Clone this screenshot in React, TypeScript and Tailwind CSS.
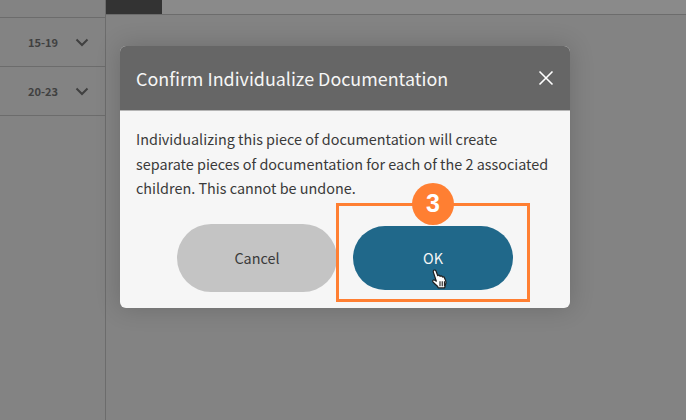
const font = { fontFamily: '"Noto Sans CJK JP", "Noto Sans", sans-serif' };

const HandCursor = () => (
  <svg width="18" height="20" viewBox="0 0 16 18" className="absolute left-[78px] top-[43px]">
    <path
      d="M2.300 1.200c.8-.6 1.800-.2 2.100.6l1.600 4.200c.4-.6 1.300-.6 1.700 0l.4.600c.4-.6 1.400-.5 1.800.1l.3.5c.5-.4 1.400-.2 1.700.4l1.200 2.900c.4 1.100.3 2.400-.2 3.500l-.4 1.700-.3 1.300H6.400l-.5-1.300c-1.100-1-2.900-2.600-4.100-3.900-.6-.7-.4-1.600.3-1.900.6-.2 1.200 0 1.700.4l.9.7L2 2.800c-.2-.6-.1-1.200.3-1.600z"
      fill="#fff"
      stroke="#1f1f1f"
      strokeWidth="1.100"
      strokeLinejoin="round"
    />
    <path d="M8 11v4.500M10 11v4.500M12 11v4.500" stroke="#1f1f1f" strokeWidth="1" />
  </svg>
);

const ChevronDown = () => (
  <svg width="14" height="9" viewBox="0 0 14 9" fill="none">
    <path d="M1.500 1.500 7 7l5.500-5.500" stroke="#404040" strokeWidth="2" />
  </svg>
);

const SideRow = ({ label }: { label: string }) => (
  <div className="h-[49px] border-b border-[#6c6c6c] flex items-center justify-end pr-[16px] gap-[17px]">
    <span className="text-[11px] font-bold text-[#404040]">{label}</span>
    <ChevronDown />
  </div>
);

export default function App() {
  return (
    <div className="relative w-[686px] h-[420px] overflow-hidden flex bg-[#838383]" style={font}>
      {/* page behind the overlay */}
      <aside className="w-[106px] h-full border-r border-[#6c6c6c]">
        <div className="h-[18px] border-b border-[#6c6c6c]" />
        <SideRow label="15-19" />
        <SideRow label="20-23" />
      </aside>
      <div className="flex-1">
        <div className="h-[15px] border-b border-[#6c6c6c] bg-[#8a8a8a]">
          <div className="w-[56px] h-[14px] bg-[#333333]" />
        </div>
      </div>

      {/* modal */}
      <div className="absolute left-[120px] top-[46px] w-[450px] h-[262px] rounded-[6px] overflow-hidden bg-[#f6f6f6] shadow-[0_0_24px_rgba(0,0,0,0.18)]">
        <div className="h-[65px] bg-[#666666] border-b border-[#b5b5b5] flex items-center justify-between px-[16px]">
          <h2 className="text-[17.9px] font-normal text-[#f6f6f6]">Confirm Individualize Documentation</h2>
          <svg width="16" height="16" viewBox="0 0 16 16" fill="none">
            <path d="M1.500 1.500l13 13M14.500 1.500l-13 13" stroke="#fff" strokeWidth="1.600" />
          </svg>
        </div>
        <p className="px-[16px] pt-[16px] text-[14.4px] leading-[24.5px] text-[#3a3a3a] whitespace-nowrap">
          Individualizing this piece of documentation will create
          <br />
          separate pieces of documentation for each of the 2 associated
          <br />
          children. This cannot be undone.
        </p>
        <div className="flex items-center gap-[16px] pl-[57px] mt-[23px]">
          <button className="w-[160px] h-[68px] rounded-full bg-[#c4c4c4] text-[14.4px] text-[#3a3a3a]">Cancel</button>
          <button className="relative w-[160px] h-[64px] rounded-full bg-[#20688a] text-[14.4px] text-[#f6f6f6]">
            OK
            <HandCursor />
          </button>
        </div>
      </div>

      {/* annotation */}
      <div className="absolute left-[336px] top-[203px] w-[194px] h-[99px] border-[3px] border-[#ff7f32]" />
      <div
        className="absolute left-[412px] top-[183px] w-[42px] h-[42px] rounded-full bg-[#ff7f32] text-white text-[25px] font-bold flex items-center justify-center"
        style={{ fontFamily: '"Liberation Sans", sans-serif' }}
      >
        3
      </div>
    </div>
  );
}
